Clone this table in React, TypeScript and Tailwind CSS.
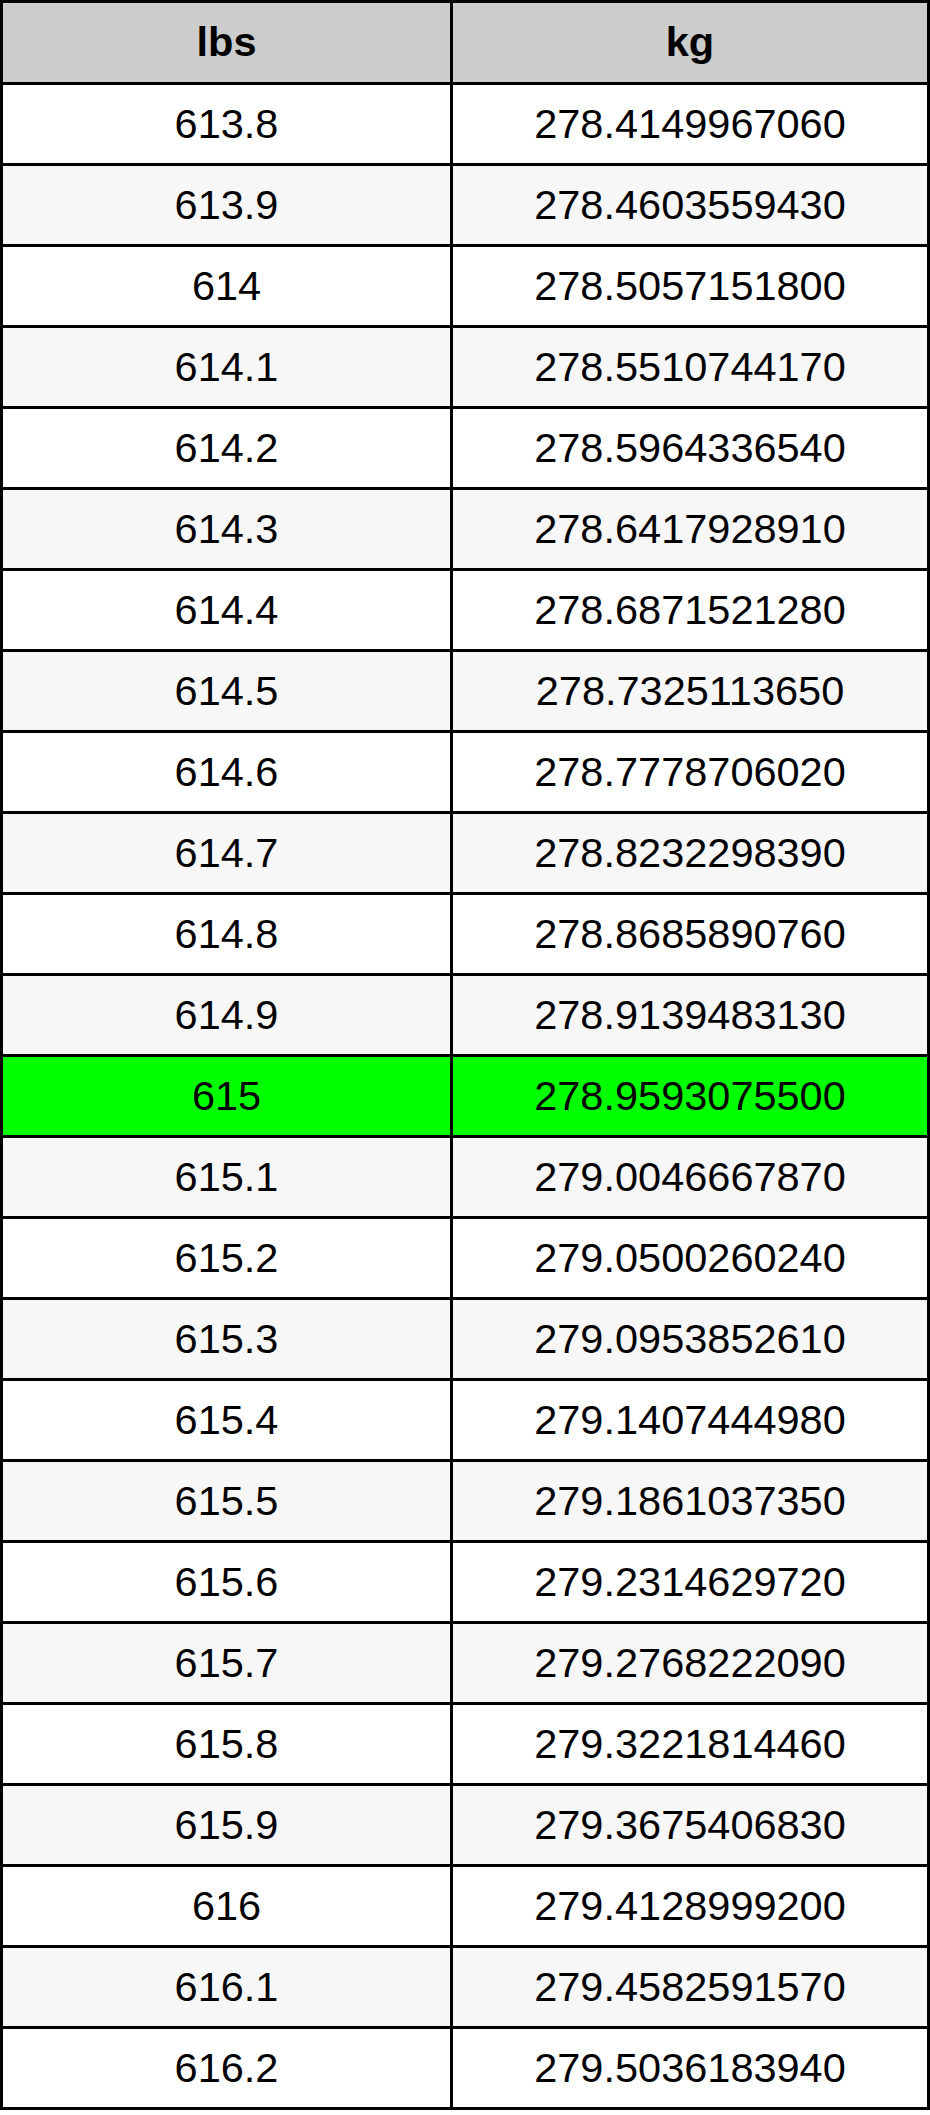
const rows: [string, string][] = [
  ["613.8", "278.4149967060"],
  ["613.9", "278.4603559430"],
  ["614", "278.5057151800"],
  ["614.1", "278.5510744170"],
  ["614.2", "278.5964336540"],
  ["614.3", "278.6417928910"],
  ["614.4", "278.6871521280"],
  ["614.5", "278.7325113650"],
  ["614.6", "278.7778706020"],
  ["614.7", "278.8232298390"],
  ["614.8", "278.8685890760"],
  ["614.9", "278.9139483130"],
  ["615", "278.9593075500"],
  ["615.1", "279.0046667870"],
  ["615.2", "279.0500260240"],
  ["615.3", "279.0953852610"],
  ["615.4", "279.1407444980"],
  ["615.5", "279.1861037350"],
  ["615.6", "279.2314629720"],
  ["615.7", "279.2768222090"],
  ["615.8", "279.3221814460"],
  ["615.9", "279.3675406830"],
  ["616", "279.4128999200"],
  ["616.1", "279.4582591570"],
  ["616.2", "279.5036183940"],
];

export default function App() {
  return (
    <div className="w-[930px] bg-white font-['Liberation_Sans',Arial,sans-serif] text-black">
      <div className="border-[3px] border-black">
        <div className="grid grid-cols-[447px_3px_474px] h-[82px] bg-[#cccccc] border-b-[3px] border-black text-[41.5px] font-bold">
          <div className="flex items-center justify-center">lbs</div>
          <div className="bg-black" />
          <div className="flex items-center justify-center">kg</div>
        </div>
        {rows.map(([lbs, kg], i) => {
          const bg = lbs === "615" ? "bg-[#00ff00]" : i % 2 === 0 ? "bg-white" : "bg-[#f7f7f7]";
          const last = i === rows.length - 1;
          return (
            <div
              key={lbs}
              className={`grid grid-cols-[447px_3px_474px] text-[41.5px] ${bg} ${last ? "h-[78px]" : "h-[81px] border-b-[3px] border-black"}`}
            >
              <div className="flex items-center justify-center">{lbs}</div>
              <div className="bg-black" />
              <div className="flex items-center justify-center">{kg}</div>
            </div>
          );
        })}
      </div>
    </div>
  );
}
